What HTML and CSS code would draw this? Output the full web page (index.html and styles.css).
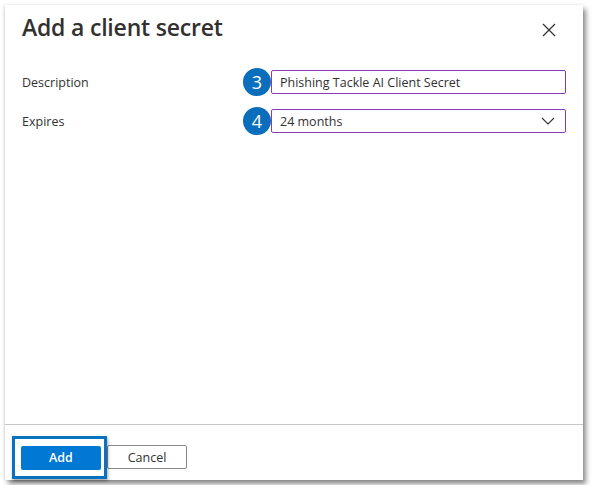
FILE: index.html
```html
<!DOCTYPE html>
<html lang="en">
<head>
  <meta charset="UTF-8">
  <title>Add a client secret</title>
  <link rel="stylesheet" href="styles.css">
</head>
<body>
  <div class="panel">
    <div class="panel-header">
      <h1>Add a client secret</h1>
      <button class="close-btn" aria-label="Close">
        <svg width="14" height="14" viewBox="0 0 14 14"><path d="M1 1 L13 13 M13 1 L1 13" stroke="#323130" stroke-width="1.2" fill="none"/></svg>
      </button>
    </div>

    <div class="panel-body">
      <div class="form-row">
        <label class="form-label">Description</label>
        <div class="field">
          <span class="step">3</span>
          <div class="input">Phishing Tackle AI Client Secret</div>
        </div>
      </div>
      <div class="form-row">
        <label class="form-label">Expires</label>
        <div class="field">
          <span class="step">4</span>
          <div class="input select">
            <span>24 months</span>
            <svg width="14" height="8" viewBox="0 0 14 8"><path d="M1 1 L7 7 L13 1" stroke="#323130" stroke-width="1.1" fill="none"/></svg>
          </div>
        </div>
      </div>
    </div>

    <div class="panel-footer">
      <div class="highlight">
        <button class="btn btn-primary">Add</button>
      </div>
      <button class="btn btn-default">Cancel</button>
    </div>
  </div>
</body>
</html>
```

FILE: styles.css
```css
* {
  box-sizing: border-box;
}

body {
  background-color: #fff;
  font-family: 'Open Sans', 'Noto Sans', sans-serif;
  color: #323130;
  margin: 0;
  padding: 5px;
}

.panel {
  width: 578px;
  height: 475px;
  background-color: #fff;
  display: flex;
  flex-direction: column;
  box-shadow: 3px 4px 5px rgba(0, 0, 0, 0.45), -1px 0 3px rgba(0, 0, 0, 0.12);
}

.panel-header {
  display: flex;
  justify-content: space-between;
  align-items: flex-start;
  padding: 6px 27px 0 17px;
  height: 58px;
}

.panel-header h1 {
  margin: 0;
  font-size: 23px;
  font-weight: 600;
  letter-spacing: -0.2px;
  color: #323130;
}

.close-btn {
  background: none;
  border: none;
  padding: 0;
  margin-top: 12px;
  cursor: pointer;
}

.panel-body {
  flex: 1;
  padding: 7px 17px 0 17px;
}

.form-row {
  display: flex;
  align-items: center;
  height: 24px;
  margin-bottom: 15px;
}

.form-label {
  width: 249px;
  font-size: 12.5px;
}

.field {
  position: relative;
  flex: 1;
  height: 24px;
}

.input {
  height: 24px;
  border: 1px solid #8a3ab9;
  border-radius: 2px;
  padding: 0 8px;
  font-size: 12.5px;
  display: flex;
  align-items: center;
  justify-content: space-between;
  background: #fff;
}

.step {
  position: absolute;
  left: -28px;
  top: -2px;
  width: 28px;
  height: 28px;
  border-radius: 50%;
  background-color: #0a6ebd;
  color: #fff;
  font-size: 18px;
  display: flex;
  align-items: center;
  justify-content: center;
}

.select svg {
  margin-right: 2px;
}

.panel-footer {
  border-top: 1px solid #c8c6c4;
  height: 56px;
  padding: 20px 16px 0 16px;
  display: flex;
  align-items: flex-start;
}

.highlight {
  position: relative;
}

.highlight::after {
  content: '';
  position: absolute;
  left: -9px;
  top: -9px;
  right: -6px;
  bottom: -9px;
  border: 3px solid #0a72bd;
  box-shadow: 1px 2px 3px rgba(0, 0, 0, 0.35);
}

.btn {
  height: 24px;
  width: 80px;
  font-family: inherit;
  font-size: 12.5px;
  font-weight: 600;
  border-radius: 2px;
  cursor: pointer;
}

.btn-primary {
  background-color: #0078d4;
  color: #fff;
  border: none;
  margin-left: 0;
}

.btn-default {
  background-color: #fff;
  color: #323130;
  border: 1px solid #8a8886;
  font-weight: 400;
  margin-left: 6px;
}
```
